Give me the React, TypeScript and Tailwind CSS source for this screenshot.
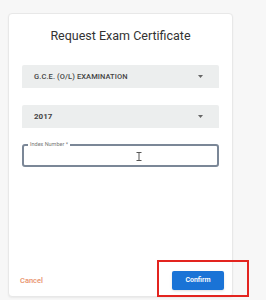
import React from "react";

function Caret() {
	return (
		<svg width="5" height="3" viewBox="0 0 5 3" aria-hidden="true">
			<path d="M0 0h5L2.5 3z" fill="#666" />
		</svg>
	);
}

function SelectBox({ value, className = "" }: { value: string; className?: string }) {
	return (
		<div
			className={`flex h-[23px] items-center justify-between rounded-t-[2px] bg-[#eceeee] pl-[12px] pr-[16px] ${className}`}
		>
			<span>{value}</span>
			<Caret />
		</div>
	);
}

export default function App() {
	return (
		<div
			className="relative h-[300px] w-[266px] overflow-hidden bg-[#f7f7f7]"
			style={{ fontFamily: "Roboto, 'Liberation Sans', sans-serif" }}
		>
			<div className="ml-[8px] mt-[13px] flex h-[284px] w-[225px] flex-col rounded-[4px] border border-[#e8e8e8] bg-white px-[13px] shadow-[0_1px_2px_rgba(0,0,0,0.06)]">
				<h1 className="mt-[13px] text-center text-[12.5px] leading-[18px] text-[#333]">
					Request Exam Certificate
				</h1>
				<SelectBox
					value="G.C.E. (O/L) EXAMINATION"
					className="mt-[20px] text-[7.5px] font-medium tracking-[0.1px] text-[#444]"
				/>
				<SelectBox value="2017" className="mt-[17px] text-[8px] font-bold text-[#444]" />
				<div className="relative mt-[16px] h-[23px] rounded-[3px] border-2 border-[#7b8797]">
					<span className="absolute left-[4px] top-[-5px] bg-white px-[2px] text-[5.5px] leading-[6px] text-[#777]">
						Index Number *
					</span>
					<svg
						className="absolute left-[112px] top-[6px]"
						width="6"
						height="9"
						viewBox="0 0 6 9"
						aria-hidden="true"
					>
						<path d="M0.5 0.5h5M3 0.5v8M0.5 8.5h5" stroke="#555" strokeWidth="1" fill="none" />
					</svg>
				</div>
				<div className="mt-auto mb-[6px] flex items-center justify-between">
					<button className="-ml-[2px] text-[7.5px] font-medium text-[#e8916a]">Cancel</button>
					<button className="mr-[-5px] h-[19px] w-[52px] rounded-[2px] bg-[#1a73d6] text-[7px] font-semibold text-white shadow-sm">
						Confirm
					</button>
				</div>
			</div>
			<div className="absolute left-[157px] top-[260px] h-[37px] w-[92px] border-2 border-[#e3241f]" />
		</div>
	);
}
